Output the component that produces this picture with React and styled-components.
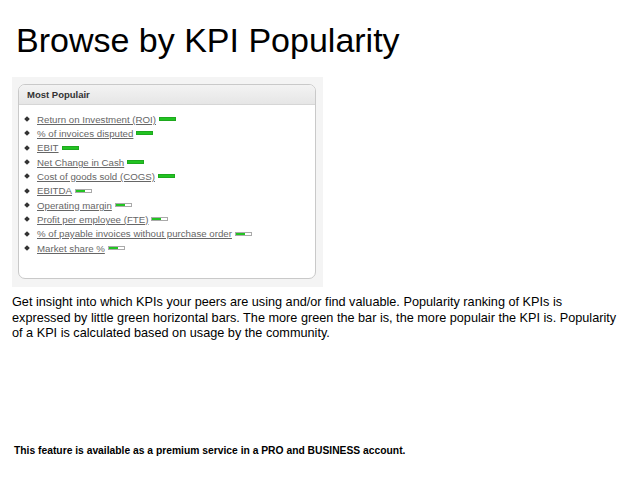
import styled, { createGlobalStyle } from "styled-components";

const GlobalStyle = createGlobalStyle`
  html, body {
    margin: 0;
    padding: 0;
    background: #ffffff;
  }
  body {
    font-family: "Liberation Sans", Arial, sans-serif;
    color: #000;
  }
`;

const kpis = [
  { name: "Return on Investment (ROI)", score: 1 },
  { name: "% of invoices disputed", score: 1 },
  { name: "EBIT", score: 1 },
  { name: "Net Change in Cash", score: 1 },
  { name: "Cost of goods sold (COGS)", score: 1 },
  { name: "EBITDA", score: 0.6 },
  { name: "Operating margin", score: 0.6 },
  { name: "Profit per employee (FTE)", score: 0.6 },
  { name: "% of payable invoices without purchase order", score: 0.6 },
  { name: "Market share %", score: 0.6 },
];

export default function App() {
  return (
    <>
      <GlobalStyle />
      <Page>
        <Title>Browse by KPI Popularity</Title>
        <Screenshot>
          <Widget>
            <WidgetHeader>Most Populair</WidgetHeader>
            <List>
              {kpis.map((kpi) => (
                <Item key={kpi.name}>
                  <Bullet />
                  <KpiLink>{kpi.name}</KpiLink>
                  <Bar $full={kpi.score >= 1}>
                    <BarFill style={{ width: `${Math.round(kpi.score * 15)}px` }} />
                  </Bar>
                </Item>
              ))}
            </List>
          </Widget>
        </Screenshot>
        <Description>
          Get insight into which KPIs your peers are using and/or find valuable. Popularity ranking of KPIs is
          expressed by little green horizontal bars. The more green the bar is, the more populair the KPI is. Popularity
          of a KPI is calculated based on usage by the community.
        </Description>
        <Note>This feature is available as a premium service in a PRO and BUSINESS account.</Note>
      </Page>
    </>
  );
}

const Page = styled.div`
  width: 638px;
  height: 478px;
  display: flex;
  flex-direction: column;
  box-sizing: border-box;
  padding-top: 20px;
`;

const Title = styled.h1`
  margin: 0 0 0 16px;
  font-weight: normal;
  font-size: 34px;
  line-height: 40px;
  color: #000;
`;

const Screenshot = styled.div`
  margin: 17px 0 0 12px;
  width: 311px;
  height: 210px;
  box-sizing: border-box;
  padding: 7px 7px 8px 6px;
  background: #f4f4f4;
`;

const Widget = styled.div`
  height: 100%;
  box-sizing: border-box;
  border: 1px solid #c9c9c9;
  border-radius: 7px;
  background: #ffffff;
  overflow: hidden;
`;

const WidgetHeader = styled.div`
  height: 19px;
  display: flex;
  align-items: center;
  padding-left: 8px;
  background: linear-gradient(#f3f3f3, #e6e6e6);
  border-bottom: 1px solid #d6d6d6;
  font-size: 9.5px;
  font-weight: bold;
  color: #333;
`;

const List = styled.ul`
  list-style: none;
  margin: 0;
  padding: 7px 0 0 6px;
`;

const Item = styled.li`
  display: flex;
  align-items: center;
  height: 14.33px;
  font-size: 9.7px;
`;

const Bullet = styled.span`
  width: 4px;
  height: 4px;
  background: #333;
  transform: rotate(45deg);
  margin-right: 8px;
  flex: none;
`;

const KpiLink = styled.a`
  color: #666;
  text-decoration: underline;
  cursor: pointer;
`;

const Bar = styled.span`
  margin-left: 3px;
  width: 17px;
  height: 4px;
  box-sizing: border-box;
  border: 1px solid ${(p) => (p.$full ? "#1ea81e" : "#aaaaaa")};
  background: #ffffff;
  display: flex;
  flex: none;
`;

const BarFill = styled.span`
  display: block;
  height: 2px;
  background: #22c322;
`;

const Description = styled.p`
  margin: 8px 0 0 12px;
  width: 608px;
  font-size: 12.7px;
  line-height: 15.5px;
  color: #000;
`;

const Note = styled.p`
  margin: auto 0 22px 14px;
  font-size: 10.3px;
  font-weight: bold;
  color: #000;
`;
